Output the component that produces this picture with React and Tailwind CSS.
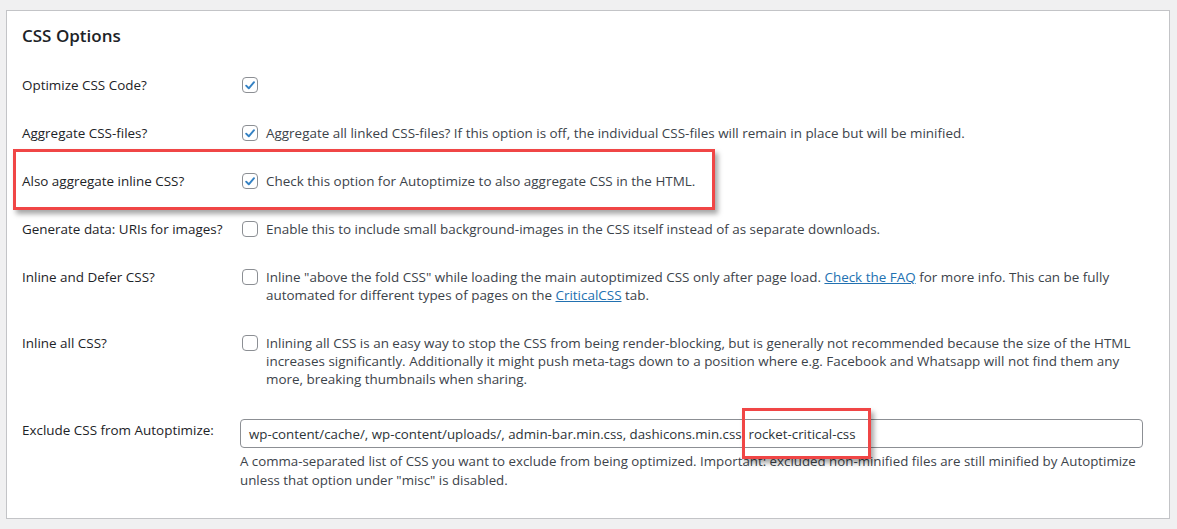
import React from "react";

const Check = ({ checked }) => (
  <span className="relative inline-flex h-4 w-4 shrink-0 items-center justify-center rounded-[4px] border border-[#8c8f94] bg-white mt-[1px]">
    {checked && (
      <svg viewBox="0 0 16 16" className="h-[15px] w-[15px]" fill="none">
        <path d="M3.6 8.2 L6.6 11.2 L12.6 4.2" stroke="#3582c4" strokeWidth="2.2" strokeLinecap="round" strokeLinejoin="round" />
      </svg>
    )}
  </span>
);

const Row = ({ label, checked, children, pad = "py-[15px]" }) => (
  <div className={`flex ${pad}`}>
    <div className="w-[220px] shrink-0 text-[#1d2327]">{label}</div>
    <div className="flex flex-1 items-start gap-[8px] pr-[12px]">
      <Check checked={checked} />
      {children && <div className="flex-1 text-[#3c434a]">{children}</div>}
    </div>
  </div>
);

export default function App() {
  return (
    <div
      className="min-h-[529px] bg-[#f0f0f1] pt-[10px] pl-[6px] pr-[7px] pb-[10px] text-[13.45px] leading-[18px]"
      style={{ fontFamily: '"Open Sans", "Noto Sans", sans-serif' }}
    >
      <div className="relative border border-[#c3c4c7] bg-white px-[15px] pb-[28px]">
        <h2 className="pt-[14px] pb-[14px] text-[17px] font-semibold leading-[22px] text-[#1d2327]">CSS Options</h2>

        <Row label="Optimize CSS Code?" checked />
        <Row label="Aggregate CSS-files?" checked>
          Aggregate all linked CSS-files? If this option is off, the individual CSS-files will remain in place but will be minified.
        </Row>
        <Row label="Also aggregate inline CSS?" checked>
          Check this option for Autoptimize to also aggregate CSS in the HTML.
        </Row>
        <Row label="Generate data: URIs for images?">
          Enable this to include small background-images in the CSS itself instead of as separate downloads.
        </Row>
        <Row label="Inline and Defer CSS?">
          Inline "above the fold CSS" while loading the main autoptimized CSS only after page load.{" "}
          <a className="text-[#2271b1] underline">Check the FAQ</a> for more info. This can be fully automated for different types of pages on the{" "}
          <a className="text-[#2271b1] underline">CriticalCSS</a> tab.
        </Row>
        <Row label="Inline all CSS?">
          Inlining all CSS is an easy way to stop the CSS from being render-blocking, but is generally not recommended because the size of the HTML increases significantly. Additionally it might push meta-tags down to a position where e.g. Facebook and Whatsapp will not find them any more, breaking thumbnails when sharing.
        </Row>

        <div className="flex pt-[16px]">
          <div className="w-[218px] shrink-0 pt-[2px] text-[#1d2327]">Exclude CSS from Autoptimize:</div>
          <div className="flex-1 pr-[10px]">
            <div className="flex h-[29px] w-[903px] items-center rounded-[4px] border border-[#8c8f94] px-[8px] text-[13.3px] text-[#2c3338]">
              wp-content/cache/, wp-content/uploads/, admin-bar.min.css, dashicons.min.css, rocket-critical-css
            </div>
            <p className="mt-[4px] text-[13.3px] leading-[19px] text-[#3c434a]">
              A comma-separated list of CSS you want to exclude from being optimized. Important: excluded non-minified files are still minified by Autoptimize unless that option under "misc" is disabled.
            </p>
          </div>
        </div>

        <div className="pointer-events-none absolute left-[6px] top-[138px] h-[61px] w-[702px] border-[3px] border-[#f04646] shadow-[3px_4px_5px_rgba(0,0,0,0.35)]" />
        <div className="pointer-events-none absolute left-[735px] top-[397px] h-[51px] w-[129px] border-[3px] border-[#f04646] shadow-[3px_4px_5px_rgba(0,0,0,0.35)]" />
      </div>
    </div>
  );
}
